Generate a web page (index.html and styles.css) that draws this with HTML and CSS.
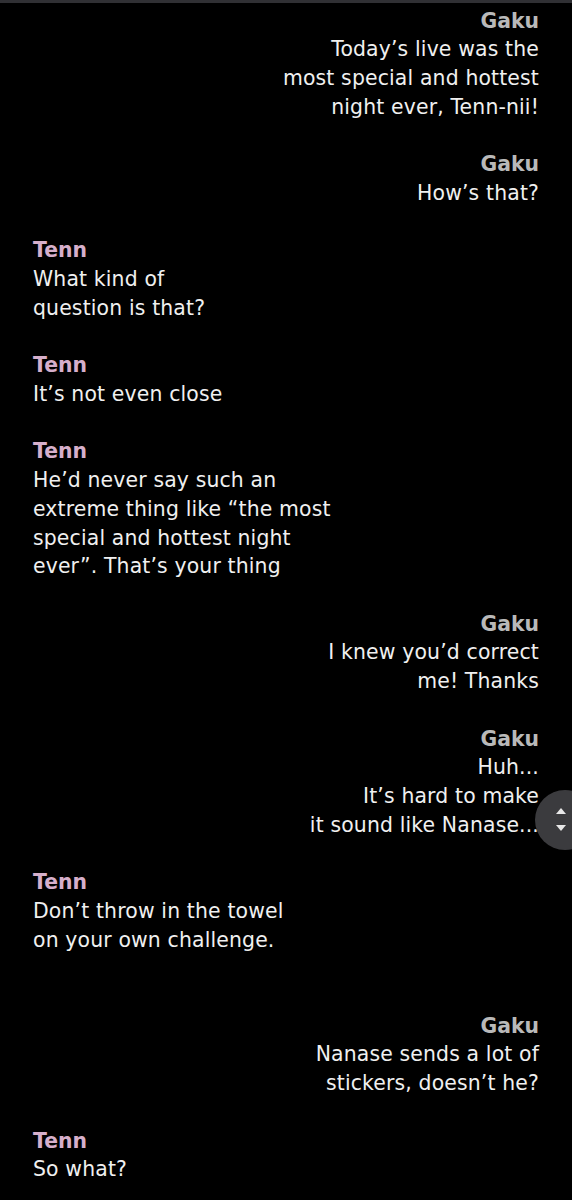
FILE: index.html
```html
<!DOCTYPE html>
<html>
<head>
<meta charset="utf-8">
<link rel="stylesheet" href="styles.css">
</head>
<body>
<div class="topbar"></div>
<main class="chat">
  <div class="msg right">
    <div class="name gaku">Gaku</div>
    <div class="text">Today’s live was the<br>most special and hottest<br>night ever, Tenn-nii!</div>
  </div>
  <div class="msg right">
    <div class="name gaku">Gaku</div>
    <div class="text">How’s that?</div>
  </div>
  <div class="msg left">
    <div class="name tenn">Tenn</div>
    <div class="text">What kind of<br>question is that?</div>
  </div>
  <div class="msg left">
    <div class="name tenn">Tenn</div>
    <div class="text">It’s not even close</div>
  </div>
  <div class="msg left">
    <div class="name tenn">Tenn</div>
    <div class="text">He’d never say such an<br>extreme thing like “the most<br>special and hottest night<br>ever”. That’s your thing</div>
  </div>
  <div class="msg right">
    <div class="name gaku">Gaku</div>
    <div class="text">I knew you’d correct<br>me! Thanks</div>
  </div>
  <div class="msg right">
    <div class="name gaku">Gaku</div>
    <div class="text">Huh...<br>It’s hard to make<br>it sound like Nanase...</div>
  </div>
  <div class="msg left">
    <div class="name tenn">Tenn</div>
    <div class="text">Don’t throw in the towel<br>on your own challenge.</div>
  </div>
  <div class="msg right spaced">
    <div class="name gaku">Gaku</div>
    <div class="text">Nanase sends a lot of<br>stickers, doesn’t he?</div>
  </div>
  <div class="msg left">
    <div class="name tenn">Tenn</div>
    <div class="text">So what?</div>
  </div>
</main>
<div class="scroll-btn">
  <svg width="14" height="28" viewBox="0 0 14 28">
    <polygon points="7,2 12,8 2,8" fill="#e8e8e8"/>
    <polygon points="2,19 12,19 7,25" fill="#e8e8e8"/>
  </svg>
</div>
</body>
</html>
```
FILE: styles.css
```css
html, body {
  margin: 0;
  padding: 0;
  background: #000;
}
body {
  font-family: "DejaVu Sans", Verdana, sans-serif;
  font-size: 20.4px;
  line-height: 28.72px;
  color: #f0f0f0;
  width: 572px;
  height: 1200px;
  overflow: hidden;
  position: relative;
}
.topbar {
  height: 3px;
  background: #303034;
}
.chat {
  display: flex;
  flex-direction: column;
  gap: 28.72px;
  padding: 3.6px 33px 0 33px;
}
.msg {
  display: flex;
  flex-direction: column;
}
.msg.right {
  align-items: flex-end;
  text-align: right;
}
.msg.left {
  align-items: flex-start;
  text-align: left;
}
.msg.spaced {
  margin-top: 28.72px;
}
.name {
  font-weight: bold;
}
.gaku {
  color: #b9b9b9;
}
.tenn {
  color: #d6afcb;
}
.text {
  white-space: nowrap;
  letter-spacing: 0.15px;
}
.scroll-btn {
  position: absolute;
  left: 535px;
  top: 790px;
  width: 60px;
  height: 60px;
  border-radius: 50%;
  background: #3b3b3e;
  display: flex;
  align-items: center;
  padding-left: 19px;
  box-sizing: border-box;
}
```
